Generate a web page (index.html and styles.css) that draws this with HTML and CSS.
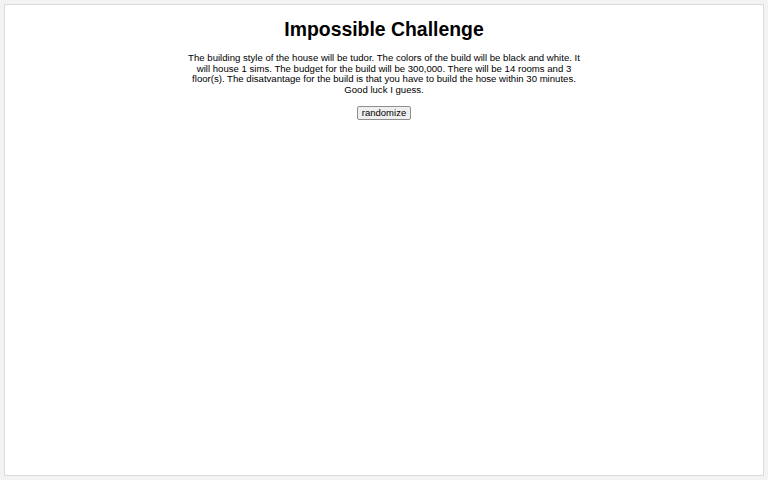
FILE: index.html
```html
<!doctype html>
<html>
<head>
	<meta charset="utf-8">
	<title>Impossible Challenge</title>
	<link rel="stylesheet" href="styles.css">
</head>
<body>
	<div id="content">
		<h1>Impossible Challenge</h1>
		<p id="challenge">The building style of the house will be tudor. The colors of the build will be black and white. It will house 1 sims. The budget for the build will be 300,000. There will be 14 rooms and 3 floor(s). The disatvantage for the build is that you have to build the hose within 30 minutes. Good luck I guess.</p>
		<button id="randomize">randomize</button>
	</div>
</body>
</html>
```

FILE: styles.css
```css
html, body {
	height: 100%;
}
body {
	margin: 0;
	padding: 4px;
	box-sizing: border-box;
	background: #f3f3f3;
	font-family: "Liberation Sans", Arial, sans-serif;
}
#content {
	height: 100%;
	box-sizing: border-box;
	background: #fff;
	border: 1px solid #dcdcdc;
	display: flex;
	flex-direction: column;
	align-items: center;
	padding-top: 13px;
}
h1 {
	margin: 0;
	font-size: 19.4px;
	line-height: 22px;
	font-weight: bold;
	color: #000;
}
#challenge {
	width: 400px;
	margin: 13px 0 0;
	font-size: 9.6px;
	line-height: 10.7px;
	text-align: center;
	color: #000;
}
#randomize {
	margin-top: 10px;
	font-family: "Liberation Sans", Arial, sans-serif;
	font-size: 9.5px;
	line-height: 12px;
	padding: 0 4px;
	background: #efefef;
	border: 1px solid #8f8f8f;
	border-radius: 2px;
	color: #000;
}
```
